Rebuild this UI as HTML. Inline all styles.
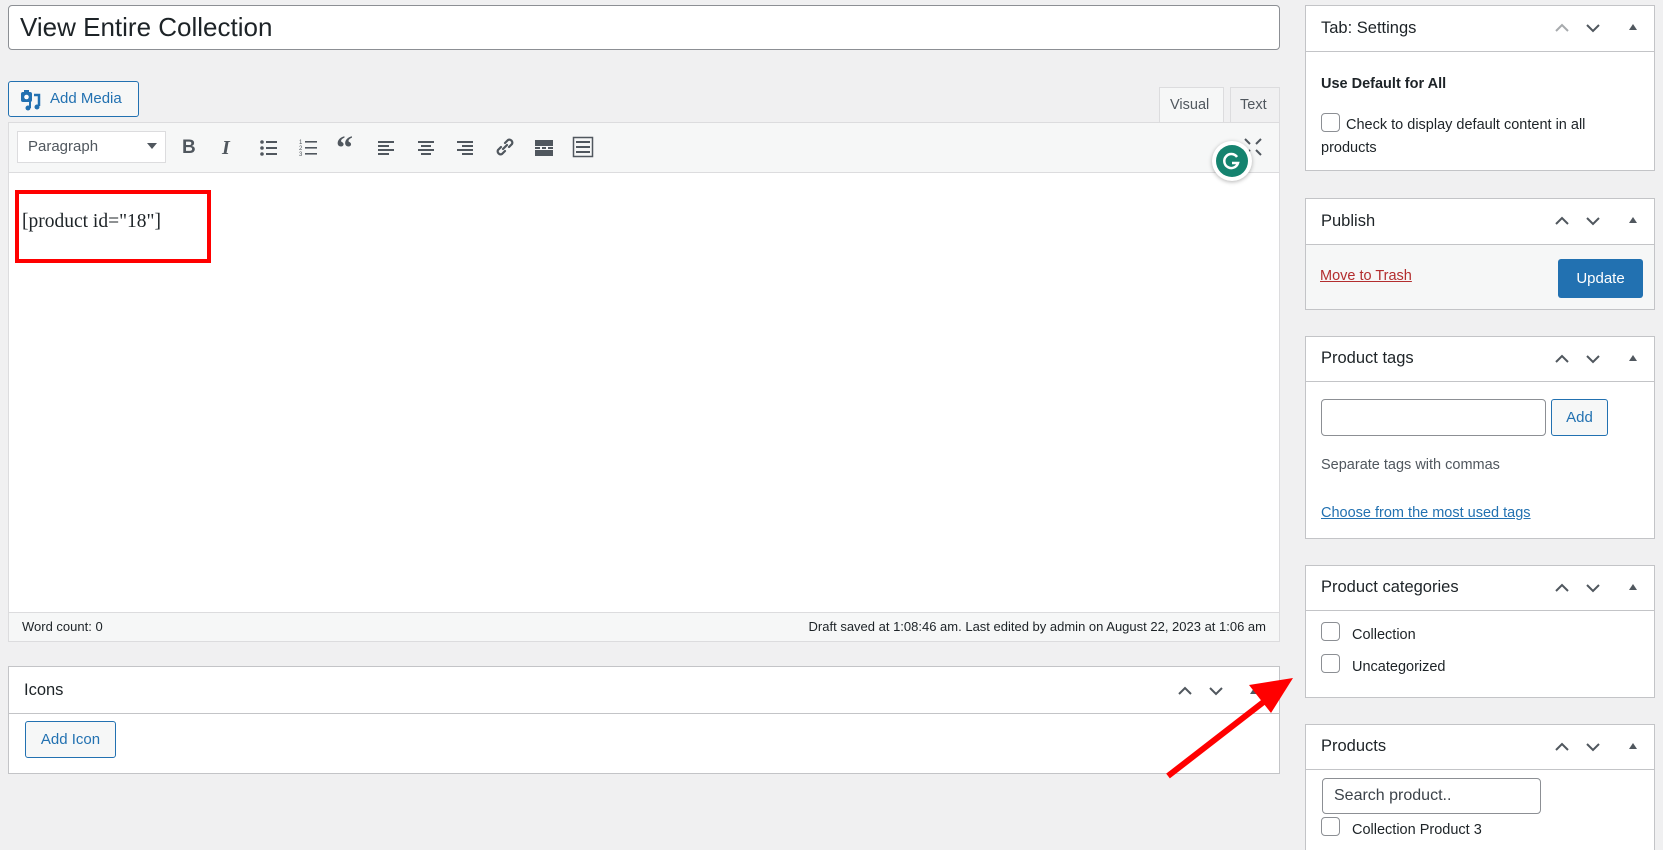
<!DOCTYPE html>
<html style="overflow:hidden;height:850px"><head><meta charset="utf-8"><style>
*{box-sizing:border-box;margin:0;padding:0}
body{width:1663px;height:850px;background:#f0f0f1;font-family:"Liberation Sans",sans-serif;color:#1d2327;position:relative;overflow:hidden;font-size:14px}
.a{position:absolute}
.box{position:absolute;background:#fff;border:1px solid #c3c4c7}
.hdr{position:absolute;left:0;right:0;top:0;border-bottom:1px solid #c3c4c7}
.ttl{position:absolute;left:15px;font-size:16.5px;color:#1d2327}
.cb{position:absolute;width:19px;height:19px;border:1px solid #8c8f94;border-radius:4px;background:#fff}
.ic{position:absolute;top:137px}
.sc{position:absolute;left:248px;top:14px}
</style></head><body>
<div class="a" style="left:8px;top:5px;width:1272px;height:45px;background:#fff;border:1px solid #8c8f94;border-radius:4px"></div>
<div class="a" style="left:20px;top:12px;font-size:26px;color:#1d2327">View Entire Collection</div>
<div class="a" style="left:8px;top:81px;width:131px;height:36px;border:1px solid #2271b1;border-radius:3px;background:#f6f7f7"></div>
<svg class="a" style="left:20px;top:89px" width="22" height="22" viewBox="0 0 22 22"><rect x="1" y="3" width="11" height="10" rx="2" fill="#2271b1"/><circle cx="6.5" cy="8" r="2.3" fill="#fff"/><rect x="4" y="1" width="5" height="3" fill="#2271b1"/><path d="M14 6h5v11" stroke="#2271b1" stroke-width="2.5" fill="none"/><circle cx="17" cy="18" r="2.5" fill="#2271b1"/><circle cx="8" cy="19" r="2.5" fill="#2271b1"/><path d="M10 12v7" stroke="#2271b1" stroke-width="2"/></svg>
<div class="a" style="left:50px;top:90px;color:#2271b1;font-size:15px">Add Media</div>
<div class="a" style="left:1159px;top:87px;width:65px;height:37px;background:#f6f7f7;border:1px solid #dcdcde;border-bottom:none"></div>
<div class="a" style="left:1170px;top:97px;font-size:14.5px;color:#50575e">Visual</div>
<div class="a" style="left:1230px;top:87px;width:50px;height:35px;background:#f0f0f1;border:1px solid #dcdcde;border-bottom:none"></div>
<div class="a" style="left:1240px;top:97px;font-size:14.5px;color:#50575e">Text</div>
<div class="a" style="left:8px;top:122px;width:1272px;height:520px;border:1px solid #dcdcde;background:#fff"></div>
<div class="a" style="left:9px;top:123px;width:1270px;height:50px;background:#f6f7f7;border-bottom:1px solid #dcdcde"></div>
<div class="a" style="left:17px;top:131px;width:149px;height:32px;background:#fff;border:1px solid #dcdcde"></div>
<div class="a" style="left:28px;top:138px;font-size:15px;color:#50575e">Paragraph</div>
<div class="a" style="left:147px;top:143px;width:0;height:0;border-left:5px solid transparent;border-right:5px solid transparent;border-top:6px solid #50575e"></div>
<div class="ic" style="left:182px;font-weight:bold;font-size:19px;color:#50575e">B</div>
<div class="ic" style="left:222px;font-style:italic;font-size:20px;color:#50575e;font-family:'Liberation Serif',serif;font-weight:bold">I</div>
<svg class="ic" style="left:259px;top:138px" width="20" height="20"><g fill="#50575e"><circle cx="3" cy="4" r="1.8"/><circle cx="3" cy="10" r="1.8"/><circle cx="3" cy="16" r="1.8"/><rect x="7" y="3" width="11" height="2"/><rect x="7" y="9" width="11" height="2"/><rect x="7" y="15" width="11" height="2"/></g></svg>
<svg class="ic" style="left:299px;top:138px" width="20" height="20"><g fill="#50575e"><rect x="6" y="3" width="12" height="1.6"/><rect x="6" y="9" width="12" height="1.6"/><rect x="6" y="15" width="12" height="1.6"/><text x="0" y="6" font-size="6">1</text><text x="0" y="12" font-size="6">2</text><text x="0" y="18" font-size="6">3</text></g></svg>
<div class="ic" style="left:336px;top:130px;font-size:34px;font-weight:bold;color:#50575e;font-family:'Liberation Serif',serif">“</div>
<svg class="ic" style="left:377px;top:138px" width="20" height="20"><g fill="#50575e"><rect x="1" y="3" width="16" height="2"/><rect x="1" y="7" width="11" height="2"/><rect x="1" y="11" width="16" height="2"/><rect x="1" y="15" width="11" height="2"/></g></svg>
<svg class="ic" style="left:416px;top:138px" width="20" height="20"><g fill="#50575e"><rect x="2" y="3" width="16" height="2"/><rect x="5" y="7" width="10" height="2"/><rect x="2" y="11" width="16" height="2"/><rect x="5" y="15" width="10" height="2"/></g></svg>
<svg class="ic" style="left:455px;top:138px" width="20" height="20"><g fill="#50575e"><rect x="2" y="3" width="16" height="2"/><rect x="7" y="7" width="11" height="2"/><rect x="2" y="11" width="16" height="2"/><rect x="7" y="15" width="11" height="2"/></g></svg>
<svg class="ic" style="left:494px;top:136px" width="22" height="22"><path d="M9 13l4-4M7 11l-3 3a3 3 0 0 0 4 4l3-3M15 11l3-3a3 3 0 0 0-4-4l-3 3" stroke="#50575e" stroke-width="2.2" fill="none" stroke-linecap="round"/></svg>
<svg class="ic" style="left:534px;top:138px" width="20" height="20"><g fill="#50575e"><rect x="1" y="2" width="18" height="6"/><rect x="1" y="12" width="18" height="6"/><rect x="1" y="9" width="5" height="2"/><rect x="8" y="9" width="4" height="2"/><rect x="14" y="9" width="5" height="2"/></g></svg>
<svg class="ic" style="left:572px;top:136px" width="22" height="22"><rect x="1.5" y="1.5" width="19" height="19" fill="none" stroke="#50575e" stroke-width="1.5"/><g fill="#50575e"><rect x="4" y="5" width="14" height="2"/><rect x="4" y="10" width="14" height="2"/><rect x="4" y="15" width="14" height="2"/></g></svg>
<svg class="a" style="left:1242px;top:136px" width="22" height="22"><path d="M3 3l5 5M19 3l-5 5M3 19l5-5M19 19l-5-5" stroke="#50575e" stroke-width="2"/></svg>
<div class="a" style="left:1212px;top:141px;width:40px;height:40px;border-radius:50%;background:#fff;box-shadow:0 1px 4px rgba(0,0,0,.3)"></div>
<div class="a" style="left:1216px;top:145px;width:32px;height:32px;border-radius:50%;background:#15836f"></div>
<svg class="a" style="left:1220px;top:149px" width="24" height="24"><path d="M17 8a7 7 0 1 0 1 6h-6" stroke="#fff" stroke-width="2.5" fill="none"/></svg>
<div class="a" style="left:15px;top:190px;width:196px;height:73px;border:4px solid #f00"></div>
<div class="a" style="left:22px;top:211px;font-family:'Liberation Serif',serif;font-size:19.5px;color:#1d2327">[product id="18"]</div>
<div class="a" style="left:9px;top:612px;width:1270px;height:29px;background:#f6f7f7;border-top:1px solid #dcdcde"></div>
<div class="a" style="left:22px;top:619px;font-size:13px;color:#1d2327">Word count: 0</div>
<div class="a" style="right:397px;top:619px;font-size:13px;color:#1d2327">Draft saved at 1:08:46 am. Last edited by admin on August 22, 2023 at 1:06 am</div>
<div class="box" style="left:8px;top:666px;width:1272px;height:108px"><div class="hdr" style="height:47px"></div>
<div class="ttl" style="left:15px;top:14px">Icons</div>
<svg class="a" style="left:1168px;top:16px" width="90" height="16"><path d="M2 11l6-6 6 6M33 5l6 6 6-6" stroke="#50575e" stroke-width="2" fill="none"/><path d="M73 11l4-6 4 6z" fill="#50575e"/></svg>
<div class="a" style="left:16px;top:54px;width:91px;height:37px;border:1px solid #2271b1;border-radius:3px;background:#f6f7f7;color:#2271b1;font-size:15px;text-align:center;line-height:35px">Add Icon</div></div>
<div class="box" style="left:1305px;top:5px;width:350px;height:166px"><div class="hdr" style="height:46px"></div>
<div class="ttl" style="top:13px">Tab: Settings</div>
<svg class="sc" width="90" height="16"><path d="M2 11l6-6 6 6" stroke="#a7aaad" stroke-width="2" fill="none"/><path d="M33 5l6 6 6-6" stroke="#50575e" stroke-width="2" fill="none"/><path d="M75 10l4-6 4 6z" fill="#50575e"/></svg>
<div class="a" style="left:15px;top:70px;font-weight:bold;font-size:14.5px">Use Default for All</div>
<div class="cb" style="left:15px;top:107px"></div>
<div class="a" style="left:15px;top:108px;width:300px;font-size:14.5px;line-height:23px;text-indent:25px">Check to display default content in all products</div></div>
<div class="box" style="left:1305px;top:198px;width:350px;height:112px"><div class="hdr" style="height:46px"></div>
<div class="ttl" style="top:13px">Publish</div>
<svg class="sc" width="90" height="16"><path d="M2 11l6-6 6 6M33 5l6 6 6-6" stroke="#50575e" stroke-width="2" fill="none"/><path d="M75 10l4-6 4 6z" fill="#50575e"/></svg>
<div class="a" style="left:0;top:46px;width:348px;height:64px;background:#f6f7f7"></div>
<div class="a" style="left:14px;top:69px;color:#b32d2e;text-decoration:underline;font-size:14.5px">Move to Trash</div>
<div class="a" style="left:252px;top:60px;width:85px;height:39px;background:#2271b1;border-radius:3px;color:#fff;text-align:center;line-height:39px;font-size:15px">Update</div></div>
<div class="box" style="left:1305px;top:336px;width:350px;height:203px"><div class="hdr" style="height:45px"></div>
<div class="ttl" style="top:12px">Product tags</div>
<svg class="sc" width="90" height="16"><path d="M2 11l6-6 6 6M33 5l6 6 6-6" stroke="#50575e" stroke-width="2" fill="none"/><path d="M75 10l4-6 4 6z" fill="#50575e"/></svg>
<div class="a" style="left:15px;top:62px;width:225px;height:37px;border:1px solid #8c8f94;border-radius:4px"></div>
<div class="a" style="left:245px;top:62px;width:57px;height:37px;border:1px solid #2271b1;border-radius:3px;background:#f6f7f7;color:#2271b1;text-align:center;line-height:35px;font-size:15px">Add</div>
<div class="a" style="left:15px;top:120px;color:#50575e;font-size:14.5px">Separate tags with commas</div>
<div class="a" style="left:15px;top:168px;color:#2271b1;text-decoration:underline;font-size:14.5px">Choose from the most used tags</div></div>
<div class="box" style="left:1305px;top:565px;width:350px;height:133px"><div class="hdr" style="height:45px"></div>
<div class="ttl" style="top:12px">Product categories</div>
<svg class="sc" width="90" height="16"><path d="M2 11l6-6 6 6M33 5l6 6 6-6" stroke="#50575e" stroke-width="2" fill="none"/><path d="M75 10l4-6 4 6z" fill="#50575e"/></svg>
<div class="cb" style="left:15px;top:56px"></div><div class="a" style="left:46px;top:61px;font-size:14.5px">Collection</div>
<div class="cb" style="left:15px;top:88px"></div><div class="a" style="left:46px;top:93px;font-size:14.5px">Uncategorized</div></div>
<div class="box" style="left:1305px;top:724px;width:350px;height:140px;border-bottom:none"><div class="hdr" style="height:45px"></div>
<div class="ttl" style="top:12px">Products</div>
<svg class="sc" width="90" height="16"><path d="M2 11l6-6 6 6M33 5l6 6 6-6" stroke="#50575e" stroke-width="2" fill="none"/><path d="M75 10l4-6 4 6z" fill="#50575e"/></svg>
<div class="a" style="left:16px;top:53px;width:219px;height:36px;border:1px solid #8c8f94;border-radius:4px;padding:8px 11px;font-size:16px;color:#3c434a">Search product..</div>
<div class="cb" style="left:15px;top:92px"></div><div class="a" style="left:46px;top:97px;font-size:14.5px">Collection Product 3</div></div>
<svg class="a" style="left:0;top:0" width="1663" height="850"><line x1="1168" y1="776" x2="1270" y2="697" stroke="#f00" stroke-width="6"/><path d="M1293 678l-44 7 22 28z" fill="#f00"/></svg>
</body></html>
